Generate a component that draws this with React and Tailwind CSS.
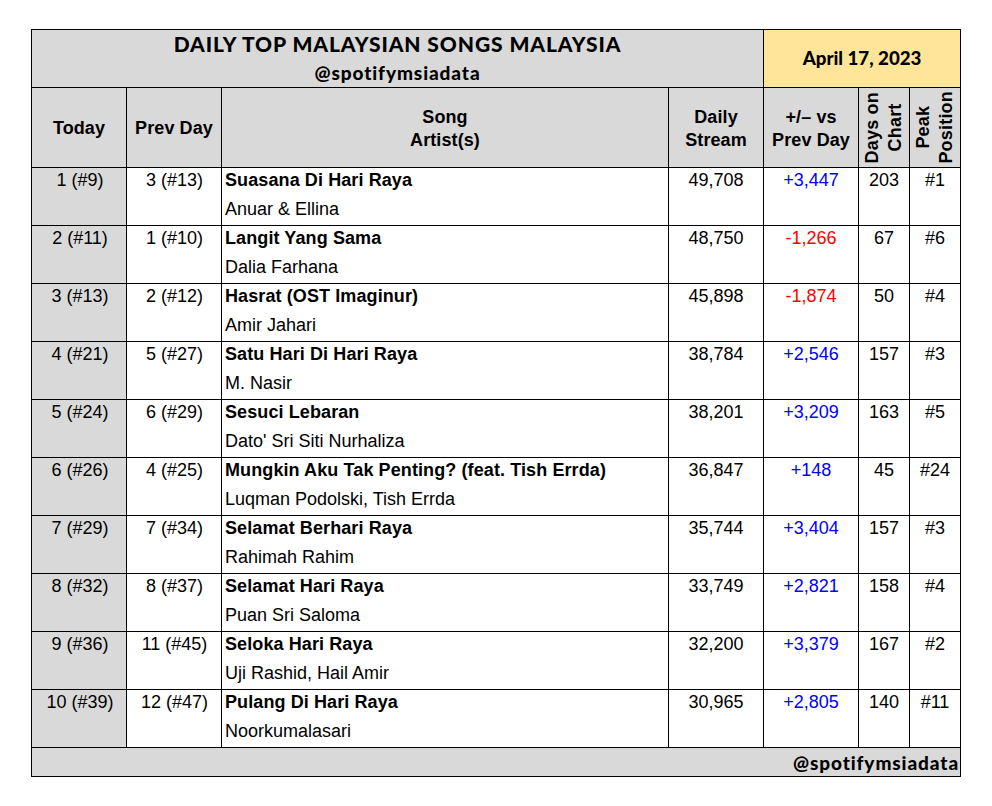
const rows = [
  ["1 (#9)", "3 (#13)", "Suasana Di Hari Raya", "Anuar & Ellina", "49,708", "+3,447", "203", "#1"],
  ["2 (#11)", "1 (#10)", "Langit Yang Sama", "Dalia Farhana", "48,750", "-1,266", "67", "#6"],
  ["3 (#13)", "2 (#12)", "Hasrat (OST Imaginur)", "Amir Jahari", "45,898", "-1,874", "50", "#4"],
  ["4 (#21)", "5 (#27)", "Satu Hari Di Hari Raya", "M. Nasir", "38,784", "+2,546", "157", "#3"],
  ["5 (#24)", "6 (#29)", "Sesuci Lebaran", "Dato' Sri Siti Nurhaliza", "38,201", "+3,209", "163", "#5"],
  ["6 (#26)", "4 (#25)", "Mungkin Aku Tak Penting? (feat. Tish Errda)", "Luqman Podolski, Tish Errda", "36,847", "+148", "45", "#24"],
  ["7 (#29)", "7 (#34)", "Selamat Berhari Raya", "Rahimah Rahim", "35,744", "+3,404", "157", "#3"],
  ["8 (#32)", "8 (#37)", "Selamat Hari Raya", "Puan Sri Saloma", "33,749", "+2,821", "158", "#4"],
  ["9 (#36)", "11 (#45)", "Seloka Hari Raya", "Uji Rashid, Hail Amir", "32,200", "+3,379", "167", "#2"],
  ["10 (#39)", "12 (#47)", "Pulang Di Hari Raya", "Noorkumalasari", "30,965", "+2,805", "140", "#11"],
];

const th = "border border-black bg-[#d9d9d9] p-0 pt-[2px] text-center align-middle font-bold leading-[23px] tracking-[0.1px]";
const td = "border border-black p-0 text-center align-top leading-[25px]";
const vertical = "mx-auto rotate-180 text-center leading-[23px] tracking-[0.2px] whitespace-nowrap [writing-mode:vertical-rl]";

export default function App() {
  return (
    <div className="min-h-[806px] bg-white pt-[29px] pl-[31px] text-[18px] text-black font-['Liberation_Sans',Arial,sans-serif]">
      <table className="w-[930px] table-fixed border-collapse">
        <colgroup>
          <col className="w-[95px]" />
          <col className="w-[95px]" />
          <col className="w-[447px]" />
          <col className="w-[95px]" />
          <col className="w-[95px]" />
          <col className="w-[51px]" />
          <col className="w-[51px]" />
        </colgroup>
        <thead>
          <tr className="h-[58px]">
            <th colSpan={4} className="border border-black bg-[#d9d9d9] p-0 text-center align-middle font-['Lato',sans-serif] font-black">
              <div className="text-[21px] leading-[28px] tracking-[0.9px]">DAILY TOP MALAYSIAN SONGS MALAYSIA</div>
              <div className="text-[19px] leading-[29px] tracking-[0.9px]">@spotifymsiadata</div>
            </th>
            <th colSpan={3} className="border border-black bg-[#ffe599] p-0 text-center align-middle font-['Lato',sans-serif] text-[18.7px] font-black whitespace-nowrap">
              April 17, 2023
            </th>
          </tr>
          <tr className="h-[80px]">
            <th className={th}>Today</th>
            <th className={th}>Prev Day</th>
            <th className={th}>Song<br />Artist(s)</th>
            <th className={th}>Daily<br />Stream</th>
            <th className={th}>+/– vs<br />Prev Day</th>
            <th className="border border-black bg-[#d9d9d9] p-0 pl-[2px] text-center align-middle font-bold">
              <div className={vertical}>Days on<br />Chart</div>
            </th>
            <th className="border border-black bg-[#d9d9d9] p-0 pl-[2px] text-center align-middle font-bold">
              <div className={vertical}>Peak<br />Position</div>
            </th>
          </tr>
        </thead>
        <tbody>
          {rows.map((r) => (
            <tr key={r[0]} className="h-[58px]">
              <td className={td + " bg-[#d9d9d9] pl-[2px]"}>{r[0]}</td>
              <td className={td + " pl-[1px]"}>{r[1]}</td>
              <td className="border border-black p-0 pl-[3px] align-top">
                <div className="font-bold leading-[25px] tracking-[0.1px]">{r[2]}</div>
                <div className="mt-[4px] leading-[25px]">{r[3]}</div>
              </td>
              <td className={td}>{r[4]}</td>
              <td className={td + (r[5][0] === "+" ? " text-[#0000ff]" : " text-[#ff0000]")}>{r[5]}</td>
              <td className={td}>{r[6]}</td>
              <td className={td}>{r[7]}</td>
            </tr>
          ))}
        </tbody>
        <tfoot>
          <tr className="h-[29px]">
            <td colSpan={7} className="border border-black bg-[#d9d9d9] p-0 pr-[1px] text-right align-middle font-['Lato',sans-serif] text-[19px] leading-[27px] tracking-[0.9px] font-black">
              @spotifymsiadata
            </td>
          </tr>
        </tfoot>
      </table>
    </div>
  );
}
